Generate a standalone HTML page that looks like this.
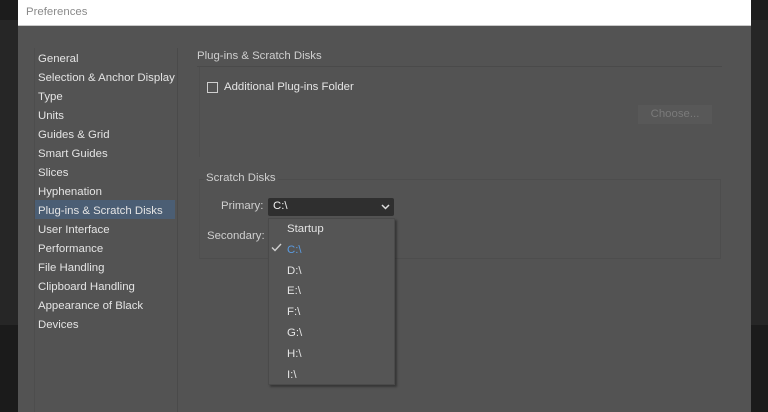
<!DOCTYPE html>
<html><head><style>
*{margin:0;padding:0;box-sizing:border-box}
body{width:768px;height:412px;overflow:hidden;position:relative;background:#262626;font-family:"Liberation Sans",Arial,sans-serif;font-size:11.4px;color:#e4e4e4}
.a{position:absolute;white-space:nowrap}
</style></head><body>
<div class="a" style="left:0;top:0;width:768px;height:20px;background:#1c1c1c"></div>
<div class="a" style="left:0;top:325px;width:768px;height:87px;background:#1b1b1b"></div>
<div class="a" style="left:18px;top:0;width:733px;height:412px;background:#535353"></div>
<div class="a" style="left:18px;top:0;width:733px;height:26px;background:#fff;border-bottom:1px solid #c9c9c9"></div>
<div class="a" style="left:26px;top:6px;color:#8a8a8a">Preferences</div>
<div class="a" style="left:34px;top:48px;width:144px;height:364px;border-left:1px solid #4d4d4d;border-right:1px solid #4a4a4a"></div>
<div class="a" style="left:35px;top:200px;width:140px;height:19px;background:#4b5e74"></div>
<div class="a" style="left:38px;top:50px;line-height:19px">General<br>Selection &amp; Anchor Display<br>Type<br>Units<br>Guides &amp; Grid<br>Smart Guides<br>Slices<br>Hyphenation<br>Plug-ins &amp; Scratch Disks<br>User Interface<br>Performance<br>File Handling<br>Clipboard Handling<br>Appearance of Black<br>Devices</div>
<div class="a" style="left:197px;top:50px;color:#cfcfcf">Plug-ins &amp; Scratch Disks</div>
<div class="a" style="left:197px;top:66px;width:525px;height:1px;background:#4a4a4a"></div>
<div class="a" style="left:199px;top:67px;width:1px;height:90px;background:#4e4e4e"></div>
<div class="a" style="left:207px;top:82px;width:11px;height:11px;border:1px solid #cfcfcf"></div>
<div class="a" style="left:224px;top:81px">Additional Plug-ins Folder</div>
<div class="a" style="left:638px;top:105px;width:74px;height:19px;background:#585858;color:#7a7a7a;text-align:center;line-height:19px">Choose...</div>
<div class="a" style="left:199px;top:179px;width:522px;height:80px;border:1px solid #4d4d4d;border-left-color:#4f4f4f"></div>
<div class="a" style="left:204px;top:172px;padding:0 2px;background:#535353;color:#cfcfcf">Scratch Disks</div>
<div class="a" style="left:221px;top:200px;color:#cfcfcf">Primary:</div>
<div class="a" style="left:207px;top:230px;color:#cfcfcf">Secondary:</div>
<div class="a" style="left:268px;top:198px;width:126px;height:18px;background:#2f2f2f;border-radius:2px"></div>
<div class="a" style="left:273px;top:200px;color:#f0f0f0">C:\</div>
<svg class="a" style="left:381px;top:204px" width="9" height="6"><path d="M1 1L4.5 4.5L8 1" stroke="#ddd" stroke-width="1.5" fill="none"/></svg>
<div class="a" style="left:268px;top:218px;width:127px;height:167px;background:#555;border:1px solid #4a4a4a;box-shadow:2px 2px 2px rgba(0,0,0,.35)"></div>
<div class="a" style="left:287px;top:219px;line-height:20.8px">Startup<br><span style="color:#5b9be0">C:\</span><br>D:\<br>E:\<br>F:\<br>G:\<br>H:\<br>I:\</div>
<svg class="a" style="left:271px;top:243px" width="11" height="9"><path d="M1 4.5L4 7.5L10 1" stroke="#d0d0d0" stroke-width="1.4" fill="none"/></svg>
</body></html>
